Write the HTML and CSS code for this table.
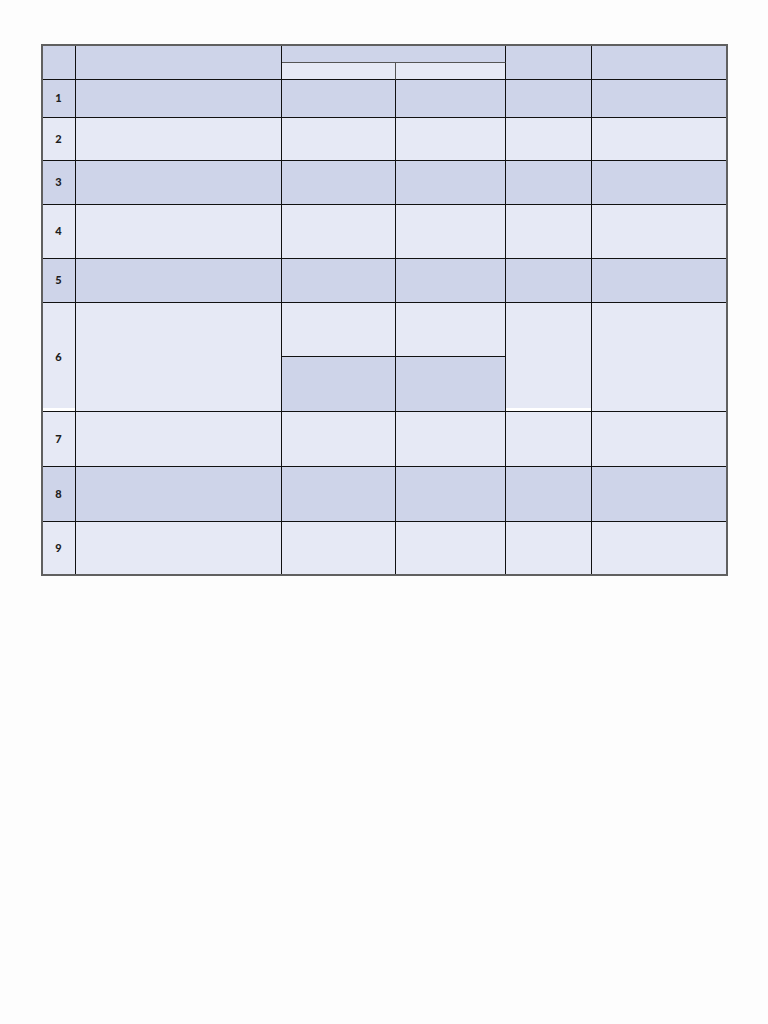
FILE: index.html
```html
<!DOCTYPE html>
<html lang="en">
<head>
<meta charset="utf-8">
<title>Table</title>
<link rel="stylesheet" href="styles.css">
</head>
<body>
<div class="page">
  <div class="grid">
    <div class="c dark h-num"></div>
    <div class="c dark h-name"></div>
    <div class="c dark h-merge"></div>
    <div class="c light h-sub1"></div>
    <div class="c light h-sub2"></div>
    <div class="c dark h-c4"></div>
    <div class="c dark h-c5 last"></div>

    <div class="c dark num">1</div><div class="c dark"></div><div class="c dark"></div><div class="c dark"></div><div class="c dark"></div><div class="c dark last"></div>
    <div class="c light num">2</div><div class="c light"></div><div class="c light"></div><div class="c light"></div><div class="c light"></div><div class="c light last"></div>
    <div class="c dark num">3</div><div class="c dark"></div><div class="c dark"></div><div class="c dark"></div><div class="c dark"></div><div class="c dark last"></div>
    <div class="c light num">4</div><div class="c light"></div><div class="c light"></div><div class="c light"></div><div class="c light"></div><div class="c light last"></div>
    <div class="c dark num">5</div><div class="c dark"></div><div class="c dark"></div><div class="c dark"></div><div class="c dark"></div><div class="c dark last"></div>

    <div class="c light num span2 strip">6</div>
    <div class="c light span2"></div>
    <div class="c light"></div>
    <div class="c light"></div>
    <div class="c light span2 strip c4"></div>
    <div class="c light span2 last c5"></div>
    <div class="c dark r6b c2"></div>
    <div class="c dark r6b c3"></div>

    <div class="c light num">7</div><div class="c light"></div><div class="c light"></div><div class="c light"></div><div class="c light"></div><div class="c light last"></div>
    <div class="c dark num">8</div><div class="c dark"></div><div class="c dark"></div><div class="c dark"></div><div class="c dark"></div><div class="c dark last"></div>
    <div class="c light num bottom">9</div><div class="c light bottom"></div><div class="c light bottom"></div><div class="c light bottom"></div><div class="c light bottom"></div><div class="c light last bottom"></div>
  </div>
</div>
</body>
</html>
```

FILE: styles.css
```css
html, body {
  margin: 0;
  padding: 0;
  background: #fdfdfd;
}

.page {
  padding: 44px 0 0 41px;
}

.grid {
  display: grid;
  width: max-content;
  grid-template-columns: 33px 206px 114px 110px 86px 134px;
  grid-template-rows: 17px 17px 38px 43px 44px 54px 44px 54px 55px 55px 55px 52px;
  border: 2px solid #606060;
}

.c {
  box-sizing: border-box;
  border-right: 1px solid #111;
  border-bottom: 1px solid #111;
}

.c.last {
  border-right: none;
}

.c.bottom {
  border-bottom: none;
}

.dark {
  background: #ced4e9;
}

.light {
  background: #e6e9f5;
}

.num {
  display: flex;
  align-items: center;
  justify-content: center;
  font-family: "Lato", "Open Sans", sans-serif;
  font-weight: 900;
  font-size: 11px;
  color: #1e1e1e;
  padding: 0 1px 2px 0;
}

.h-num { grid-column: 1; grid-row: 1 / span 2; }
.h-name { grid-column: 2; grid-row: 1 / span 2; }
.h-merge { grid-column: 3 / span 2; grid-row: 1; border-bottom-color: #555; }
.h-sub1 { grid-column: 3; grid-row: 2; border-right-color: #555; }
.h-sub2 { grid-column: 4; grid-row: 2; }
.h-c4 { grid-column: 5; grid-row: 1 / span 2; }
.h-c5 { grid-column: 6; grid-row: 1 / span 2; }

.span2 { grid-row: span 2; }
.c4 { grid-column: 5; }
.c5 { grid-column: 6; }
.c2 { grid-column: 3; }
.c3 { grid-column: 4; }

.strip {
  box-shadow: inset 0 -3px 0 #ffffff;
}
```
